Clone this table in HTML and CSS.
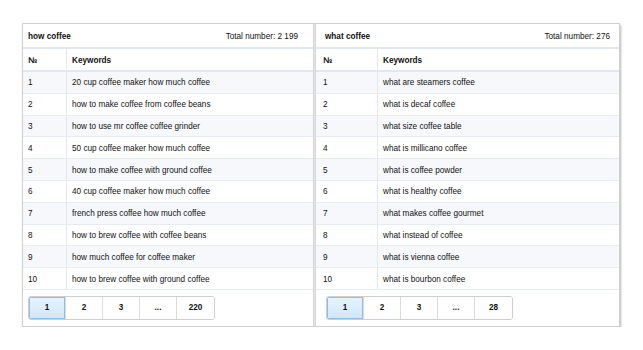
FILE: index.html
```html
<!DOCTYPE html>
<html>
<head>
<meta charset="utf-8">
<link rel="stylesheet" href="styles.css">
</head>
<body>
<div class="wrap">
  <div class="panel panel-left">
    <div class="head"><span class="title">how coffee</span><span class="total">Total number: 2 199</span></div>
    <div class="row colhead"><div class="num">№</div><div class="kw">Keywords</div></div>
    <div class="row odd"><div class="num">1</div><div class="kw">20 cup coffee maker how much coffee</div></div>
    <div class="row"><div class="num">2</div><div class="kw">how to make coffee from coffee beans</div></div>
    <div class="row odd"><div class="num">3</div><div class="kw">how to use mr coffee coffee grinder</div></div>
    <div class="row"><div class="num">4</div><div class="kw">50 cup coffee maker how much coffee</div></div>
    <div class="row odd"><div class="num">5</div><div class="kw">how to make coffee with ground coffee</div></div>
    <div class="row"><div class="num">6</div><div class="kw">40 cup coffee maker how much coffee</div></div>
    <div class="row odd"><div class="num">7</div><div class="kw">french press coffee how much coffee</div></div>
    <div class="row"><div class="num">8</div><div class="kw">how to brew coffee with coffee beans</div></div>
    <div class="row odd"><div class="num">9</div><div class="kw">how much coffee for coffee maker</div></div>
    <div class="row"><div class="num">10</div><div class="kw">how to brew coffee with ground coffee</div></div>
    <div class="pager">
      <div class="pages">
        <span class="pg active">1</span><span class="pg">2</span><span class="pg">3</span><span class="pg">...</span><span class="pg">220</span>
      </div>
    </div>
  </div>
  <div class="divider"></div>
  <div class="panel panel-right">
    <div class="head"><span class="title">what coffee</span><span class="total">Total number: 276</span></div>
    <div class="row colhead"><div class="num">№</div><div class="kw">Keywords</div></div>
    <div class="row odd"><div class="num">1</div><div class="kw">what are steamers coffee</div></div>
    <div class="row"><div class="num">2</div><div class="kw">what is decaf coffee</div></div>
    <div class="row odd"><div class="num">3</div><div class="kw">what size coffee table</div></div>
    <div class="row"><div class="num">4</div><div class="kw">what is millicano coffee</div></div>
    <div class="row odd"><div class="num">5</div><div class="kw">what is coffee powder</div></div>
    <div class="row"><div class="num">6</div><div class="kw">what is healthy coffee</div></div>
    <div class="row odd"><div class="num">7</div><div class="kw">what makes coffee gourmet</div></div>
    <div class="row"><div class="num">8</div><div class="kw">what instead of coffee</div></div>
    <div class="row odd"><div class="num">9</div><div class="kw">what is vienna coffee</div></div>
    <div class="row"><div class="num">10</div><div class="kw">what is bourbon coffee</div></div>
    <div class="pager">
      <div class="pages">
        <span class="pg active">1</span><span class="pg">2</span><span class="pg">3</span><span class="pg">...</span><span class="pg">28</span>
      </div>
    </div>
  </div>
</div>
</body>
</html>
```
FILE: styles.css
```css
* { box-sizing: border-box; }
body {
  margin: 0;
  background: #fff;
  font-family: "Liberation Sans", Arial, sans-serif;
  font-size: 8.2px;
  color: #111;
}
.wrap {
  margin: 23px 0 0 22px;
  width: 598px;
  display: flex;
  border: 1px solid #cfcfcf;
  box-shadow: 1px 2px 2px rgba(0, 0, 0, 0.28);
  background: #fff;
}
.panel-left { width: 290px; }
.panel-right { width: 303px; }
.divider {
  width: 3px;
  background: #e4e4e4;
  border-left: 1px solid #d4d4d4;
  border-right: 1px solid #d8d8d8;
}
.head {
  height: 25px;
  display: flex;
  align-items: center;
  justify-content: space-between;
  padding: 2px 15px 0 5px;
  border-bottom: 2px solid #e2e8f3;
}
.panel-right .head { padding: 2px 9px 0 9px; }
.title { font-weight: bold; }
.total { font-weight: normal; }
.row {
  display: flex;
  height: 21.8px;
  border-bottom: 1px solid #e6ebf4;
  align-items: stretch;
}
.row.colhead { height: 23px; border-bottom: 2px solid #e2e8f3; font-weight: bold; }
.row.odd { background: #f6f8fc; }
.num {
  display: flex;
  align-items: center;
  border-right: 1px solid #e3e8f1;
  padding: 1px 0 0 5px;
}
.kw {
  display: flex;
  align-items: center;
  padding: 1px 0 0 5px;
}
.panel-left .num { width: 44px; }
.panel-right .num { width: 62px; padding-left: 7px; }
.pager {
  height: 36px;
  padding: 6px 0 0 5px;
}
.panel-right .pager { padding-left: 10px; }
.pages {
  display: inline-flex;
  border: 1px solid #cfcfcf;
  border-radius: 3px;
  overflow: hidden;
  height: 24px;
}
.pg {
  width: 37px;
  display: flex;
  align-items: center;
  justify-content: center;
  font-weight: bold;
  border-right: 1px solid #dcdcdc;
  background: #fff;
}
.pg:last-child { border-right: none; }
.pg.active {
  background: linear-gradient(#e8f4fe, #cfe6fb);
  box-shadow: inset 0 0 0 1px #8fbde8;
}
```
